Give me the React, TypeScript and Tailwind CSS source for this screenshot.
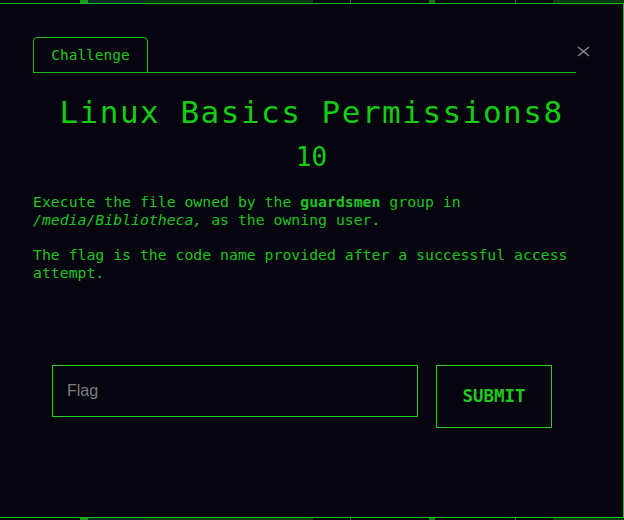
import React from 'react';

const mono = "font-['DejaVu_Sans_Mono','Liberation_Mono',monospace]";

// strips of the page peeking out above and below the modal
function BackdropStrip({ h }: { h: string }) {
  return (
    <div className={`flex w-full ${h} bg-[#04030e]`}>
      <div className="w-[80px]" />
      <div className="w-[8px] bg-[#1a9a1a]" />
      <div className="w-[56px] bg-[#0b2a26]" />
      <div className="w-[169px] bg-[#0d3a12]" />
      <div className="w-[37px]" />
      <div className="w-px bg-[#1f7a1f]" />
      <div className="w-[78px]" />
      <div className="w-[6px] bg-[#187018]" />
      <div className="w-[80px]" />
      <div className="w-px bg-[#1f7a1f]" />
      <div className="w-[37px]" />
      <div className="flex-1 bg-[#0d3a12]" />
    </div>
  );
}

export default function App() {
  return (
    <div className={`w-[624px] h-[520px] flex flex-col bg-[#05040f] overflow-hidden ${mono}`}>
      <BackdropStrip h="h-[3px]" />

      <div className="relative flex-1 flex flex-col border-t border-r border-b border-[#22b822] bg-[#05040f] pt-[33px] pl-[33px] pr-[33px]">
        {/* Close */}
        <button className="absolute top-[40px] right-[33px] w-[14px] h-[14px] flex items-center justify-center">
          <svg width="13" height="11" viewBox="0 0 13 11" fill="none" stroke="#858585" strokeWidth="1.4">
            <path d="M1 1 L6.5 5.5 L12 1" />
            <path d="M1 10 L6.5 5.5 L12 10" />
          </svg>
        </button>

        {/* Tabs */}
        <div className="flex mr-[14px] border-b border-[#22b822]">
          <div className="h-[36px] w-[115px] -mb-px pt-[2px] flex items-center justify-center border border-[#22b822] rounded-t-[4px] text-[14.5px] text-[#1ec81e]">
            Challenge
          </div>
        </div>

        {/* Title */}
        <h1 className="mt-[20px] text-center text-[31px] leading-[38px] tracking-[1.5px] text-[#14cc14]">
          Linux Basics Permissions8
        </h1>
        <h2 className="mt-[10px] text-center text-[26px] leading-[32px] text-[#14cc14]">10</h2>

        {/* Description */}
        <div className="mt-[20px] text-[14.8px] leading-[18px] text-[#1ec41e]">
          <p>
            Execute the file owned by the <strong className="font-bold">guardsmen</strong> group in{' '}
            <em className="italic">/media/Bibliotheca,</em> as the owning user.
          </p>
          <p className="mt-[17px]">
            The flag is the code name provided after a successful access attempt.
          </p>
        </div>

        {/* Form */}
        <div className="mt-[83px] ml-[19px] flex items-start gap-[18px]">
          <input
            placeholder="Flag"
            className="w-[366px] h-[52px] shrink-0 px-[14px] bg-transparent border border-[#1ed21e] outline-none font-['Liberation_Sans',Arial,sans-serif] text-[16px] text-[#cccccc] placeholder:text-[#7d7d7d]"
          />
          <button className="w-[116px] h-[63px] shrink-0 border border-[#1ed21e] text-[17.5px] font-bold text-[#1ec81e]">
            SUBMIT
          </button>
        </div>
      </div>

      <BackdropStrip h="h-[2px]" />
    </div>
  );
}
